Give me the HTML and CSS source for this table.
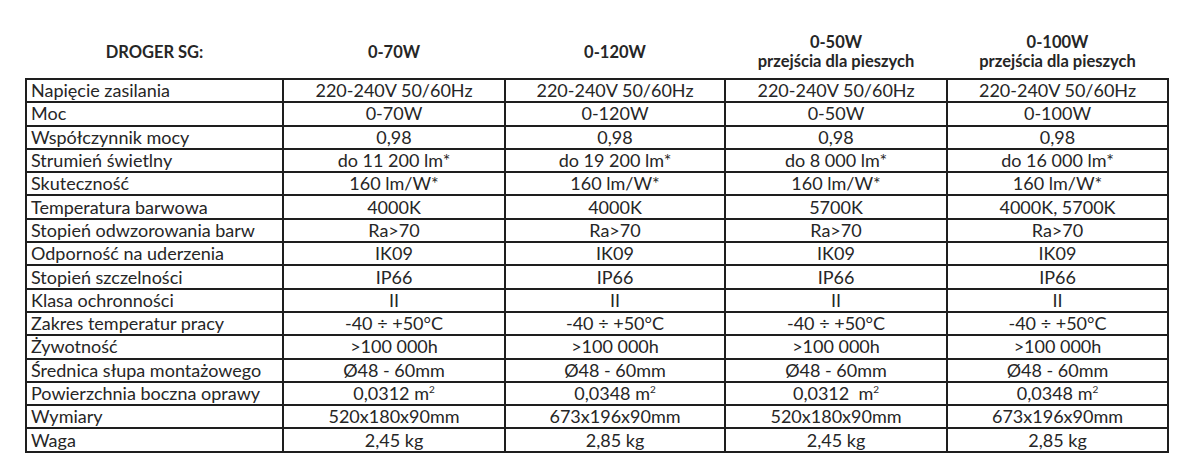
FILE: index.html
```html
<!DOCTYPE html>
<html lang="pl">
<head>
<meta charset="utf-8">
<title>DROGER SG</title>
<link rel="stylesheet" href="styles.css">
</head>
<body>
<div class="page">
  <table class="spec">
    <colgroup>
      <col class="c1"><col class="c2"><col class="c3"><col class="c4"><col class="c5">
    </colgroup>
    <thead>
      <tr>
        <th>DROGER SG:</th>
        <th>0-70W</th>
        <th>0-120W</th>
        <th><span class="hl">0-50W</span><span class="hl">przejścia dla pieszych</span></th>
        <th><span class="hl">0-100W</span><span class="hl">przejścia dla pieszych</span></th>
      </tr>
    </thead>
    <tbody>
      <tr><td>Napięcie zasilania</td><td>220-240V 50/60Hz</td><td>220-240V 50/60Hz</td><td>220-240V 50/60Hz</td><td>220-240V 50/60Hz</td></tr>
      <tr><td>Moc</td><td>0-70W</td><td>0-120W</td><td>0-50W</td><td>0-100W</td></tr>
      <tr><td>Współczynnik mocy</td><td>0,98</td><td>0,98</td><td>0,98</td><td>0,98</td></tr>
      <tr><td>Strumień świetlny</td><td>do 11 200 lm*</td><td>do 19 200 lm*</td><td>do 8 000 lm*</td><td>do 16 000 lm*</td></tr>
      <tr><td>Skuteczność</td><td>160 lm/W*</td><td>160 lm/W*</td><td>160 lm/W*</td><td>160 lm/W*</td></tr>
      <tr><td>Temperatura barwowa</td><td>4000K</td><td>4000K</td><td>5700K</td><td>4000K, 5700K</td></tr>
      <tr><td>Stopień odwzorowania barw</td><td>Ra&gt;70</td><td>Ra&gt;70</td><td>Ra&gt;70</td><td>Ra&gt;70</td></tr>
      <tr><td>Odporność na uderzenia</td><td>IK09</td><td>IK09</td><td>IK09</td><td>IK09</td></tr>
      <tr><td>Stopień szczelności</td><td>IP66</td><td>IP66</td><td>IP66</td><td>IP66</td></tr>
      <tr><td>Klasa ochronności</td><td>II</td><td>II</td><td>II</td><td>II</td></tr>
      <tr><td>Zakres temperatur pracy</td><td>-40 ÷ +50°C</td><td>-40 ÷ +50°C</td><td>-40 ÷ +50°C</td><td>-40 ÷ +50°C</td></tr>
      <tr><td>Żywotność</td><td>&gt;100 000h</td><td>&gt;100 000h</td><td>&gt;100 000h</td><td>&gt;100 000h</td></tr>
      <tr><td>Średnica słupa montażowego</td><td>Ø48 - 60mm</td><td>Ø48 - 60mm</td><td>Ø48 - 60mm</td><td>Ø48 - 60mm</td></tr>
      <tr><td>Powierzchnia boczna oprawy</td><td>0,0312 m<sup>2</sup></td><td>0,0348 m<sup>2</sup></td><td>0,0312&nbsp; m<sup>2</sup></td><td>0,0348 m<sup>2</sup></td></tr>
      <tr><td>Wymiary</td><td>520x180x90mm</td><td>673x196x90mm</td><td>520x180x90mm</td><td>673x196x90mm</td></tr>
      <tr><td>Waga</td><td>2,45 kg</td><td>2,85 kg</td><td>2,45 kg</td><td>2,85 kg</td></tr>
    </tbody>
  </table>
</div>
</body>
</html>
```

FILE: styles.css
```css
html, body {
  margin: 0;
  padding: 0;
  background: #ffffff;
}

.page {
  padding: 33px 0 0 25px;
}

.spec {
  border-collapse: collapse;
  table-layout: fixed;
  width: 1144px;
  font-family: "Lato", "Open Sans", sans-serif;
  color: #262626;
}

.c1 { width: 257px; }
.c2 { width: 222px; }
.c3 { width: 220px; }
.c4 { width: 222px; }
.c5 { width: 221px; }

.spec th {
  font-size: 16.5px;
  font-weight: bold;
  line-height: 19px;
  height: 38px;
  padding: 0 0 7px 0;
  vertical-align: middle;
  text-align: center;
  color: #262626;
  white-space: nowrap;
}

.hl {
  display: block;
  line-height: 19px;
}

.spec td {
  border: 2px solid #1e1e1e;
  height: 21.3px;
  padding: 0;
  font-size: 18px;
  line-height: 21px;
  text-align: center;
  white-space: nowrap;
}

.spec td:first-child {
  text-align: left;
  padding-left: 4px;
}

.spec sup {
  font-size: 10px;
  line-height: 0;
  vertical-align: 7px;
}
```
